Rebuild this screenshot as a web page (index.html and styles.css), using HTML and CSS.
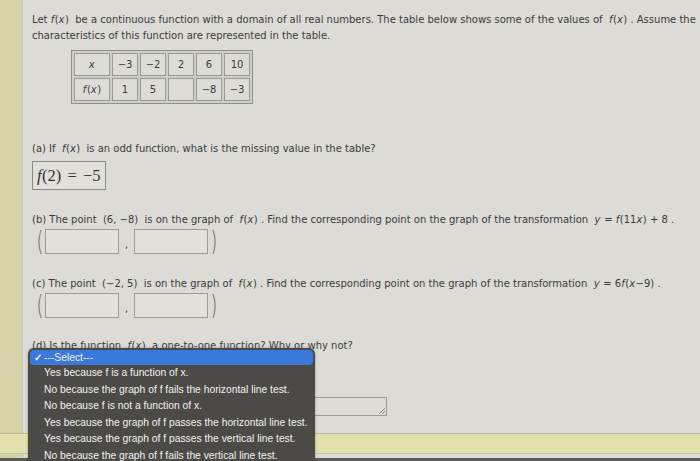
FILE: index.html
```html
<!DOCTYPE html>
<html>
<head>
<meta charset="utf-8">
<link rel="stylesheet" href="styles.css">
</head>
<body>
<div class="page">
  <div class="strip"></div>
  <div class="main">
    <p class="intro">Let <i>f</i>(<i>x</i>)&nbsp; be a continuous function with a domain of all real numbers. The table below shows some of the values of &nbsp;<i>f</i>(<i>x</i>)&nbsp;. Assume the characteristics of this function are represented in the table.</p>
    <table class="vals">
      <tr><td class="h"><i>x</i></td><td>−3</td><td>−2</td><td>2</td><td>6</td><td>10</td></tr>
      <tr><td class="h"><i>f</i>(<i>x</i>)</td><td>1</td><td>5</td><td></td><td>−8</td><td>−3</td></tr>
    </table>
    <p class="q qa">(a) If &nbsp;<i>f</i>(<i>x</i>)&nbsp; is an odd function, what is the missing value in the table?</p>
    <div class="ans"><i>f</i>(2) = −5</div>
    <p class="q qb">(b) The point &nbsp;(6, −8)&nbsp; is on the graph of &nbsp;<i>f</i>(<i>x</i>) . Find the corresponding point on the graph of the transformation &nbsp;<i>y</i> = <i>f</i>(11<i>x</i>) + 8 .</p>
    <div class="pt"><span class="par">(</span><span class="box"></span><span class="comma">,</span><span class="box"></span><span class="par">)</span></div>
    <p class="q qc">(c) The point &nbsp;(−2, 5)&nbsp; is on the graph of &nbsp;<i>f</i>(<i>x</i>) . Find the corresponding point on the graph of the transformation &nbsp;<i>y</i> = 6<i>f</i>(<i>x</i>−9) .</p>
    <div class="pt"><span class="par">(</span><span class="box"></span><span class="comma">,</span><span class="box"></span><span class="par">)</span></div>
    <p class="q qd">(d) Is the function &nbsp;<i>f</i>(<i>x</i>)&nbsp; a one-to-one function? Why or why not?</p>
    <div class="why"><span class="grip"></span></div>
  </div>
</div>
<div class="yellow"></div>
<div class="bottomline"></div>
<ul class="menu">
  <li class="sel"><span class="chk">✓</span>---Select---</li>
  <li>Yes because f is a function of x.</li>
  <li>No because the graph of f fails the horizontal line test.</li>
  <li>No because f is not a function of x.</li>
  <li>Yes because the graph of f passes the horizontal line test.</li>
  <li>Yes because the graph of f passes the vertical line test.</li>
  <li>No because the graph of f fails the vertical line test.</li>
</ul>
</body>
</html>
```

FILE: styles.css
```css
html, body {
  margin: 0;
  padding: 0;
  width: 700px;
  height: 461px;
  overflow: hidden;
  background: #dcdbd5;
  font-family: "DejaVu Sans", Verdana, sans-serif;
  color: #3b3b3b;
  position: relative;
}
.page {
  display: flex;
  height: 461px;
}
.strip {
  width: 22px;
  flex: none;
  background: #d3d2a8;
  border-right: 1px solid #c9c8bd;
}
.main {
  flex: 1;
  padding: 12px 0 0 9px;
  font-size: 10px;
  line-height: 16px;
}
.main i { margin-right: 0.5px; }
p { margin: 0; }
.intro { width: 672px; }
.vals {
  margin: 6px 0 0 39px;
  border: 1px solid #8f8f8c;
  border-spacing: 2px;
  background: #cfcfca;
}
.vals td {
  border: 1px solid #9a9a96;
  background: #dedcd6;
  height: 21px;
  padding: 0;
  text-align: center;
  font-size: 10px;
  min-width: 24px;
  width: 24px;
}
.vals td.h { width: 34px; }
.qa { margin-top: 37px; }
.ans {
  margin-top: 4px;
  width: 72px;
  height: 27px;
  border: 1px solid #8a8a86;
  background: #e1e0da;
  font-family: "Liberation Serif", "Times New Roman", serif;
  font-size: 16.5px;
  word-spacing: 2px;
  line-height: 27px;
  text-indent: 4px;
  color: #333;
}
.qb { margin-top: 22px; }
.pt {
  display: flex;
  align-items: center;
  margin-top: -1px;
  height: 28px;
  padding-left: 3px;
}
.par {
  font-family: "DejaVu Sans", sans-serif;
  font-size: 27px;
  font-weight: 200;
  color: #555;
  transform: scaleX(0.6);
  line-height: 28px;
  width: 9px;
  text-align: center;
}
.box {
  width: 72px;
  height: 23px;
  border: 1px solid #9b9b97;
  background: #e2e1dc;
  margin: 0 1px;
}
.comma {
  width: 13px;
  text-align: center;
  font-size: 10px;
  padding-top: 8px;
}
.qc { margin-top: 21px; }
.qd { margin-top: 19px; }
.why {
  margin-top: 43px;
  width: 353px;
  height: 17px;
  border: 1px solid #9b9b97;
  background: #dedcd6;
  position: relative;
}
.grip {
  position: absolute;
  right: 1px;
  bottom: 1px;
  width: 6px;
  height: 6px;
  background: linear-gradient(135deg, transparent 45%, #888 45%, #888 55%, transparent 55%, transparent 70%, #888 70%, #888 80%, transparent 80%);
}
.yellow {
  position: absolute;
  left: 0;
  top: 433px;
  width: 700px;
  height: 19px;
  background: #e3e2ac;
  border-top: 1px solid #b9b8a0;
  border-bottom: 1px solid #c4c3ad;
}
.bottomline {
  position: absolute;
  left: 0;
  top: 458px;
  width: 700px;
  height: 3px;
  background: #5a5a58;
}
.menu {
  position: absolute;
  left: 28px;
  top: 348px;
  width: 283px;
  height: 120px;
  margin: 0;
  padding: 2px 2px 0 2px;
  list-style: none;
  background: #4b4a47;
  border-radius: 6px;
  font-family: "Liberation Sans", Arial, sans-serif;
  font-size: 10.3px;
  color: #f2f2f0;
  box-shadow: 0 0 3px rgba(0,0,0,0.3);
}
.menu li {
  height: 16.5px;
  line-height: 16.5px;
  padding-left: 14px;
  white-space: nowrap;
}
.menu li.sel {
  background: #3b78dc;
  border-radius: 4px;
  height: 15px;
  line-height: 15px;
  padding-left: 4px;
  margin-bottom: 0;
}
.chk {
  display: inline-block;
  width: 10px;
  font-weight: bold;
}
```
